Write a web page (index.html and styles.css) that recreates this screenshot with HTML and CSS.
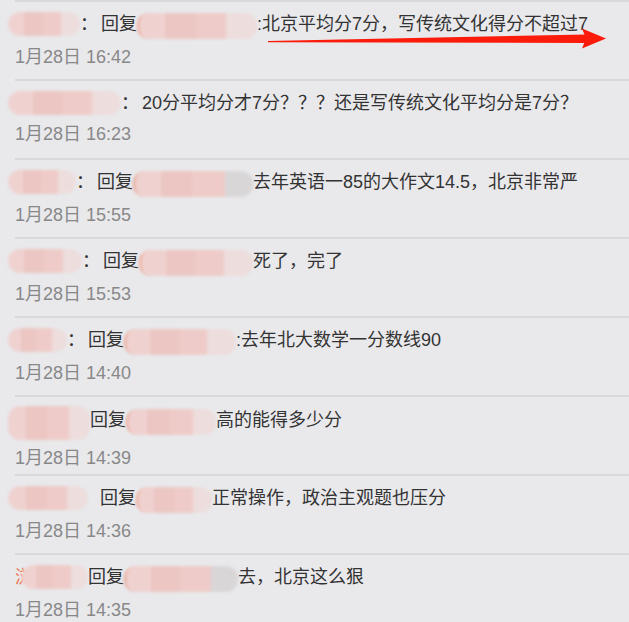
FILE: index.html
```html
<!DOCTYPE html>
<html lang="zh-CN">
<head>
    <meta charset="UTF-8">
    <meta name="viewport" content="width=device-width, initial-scale=1.0">
    <title>评论</title>
    <link rel="stylesheet" href="styles.css">
</head>
<body>
    <ul class="comments">
        <li class="item">
            <p class="text"><span class="blur name" style="width:72px"></span><span class="colon">：</span>回复<span class="blur at" style="width:118px"></span>:北京平均分7分，写传统文化得分不超过7</p>
            <p class="time">1月28日 16:42</p>
        </li>
        <li class="item">
            <p class="text"><span class="blur name" style="width:113px"></span><span class="colon">：</span>20分平均分才7分？？？还是写传统文化平均分是7分？</p>
            <p class="time">1月28日 16:23</p>
        </li>
        <li class="item">
            <p class="text"><span class="blur name" style="width:68px"></span><span class="colon">：</span>回复<span class="blur at gray-end" style="width:118px"></span>去年英语一85的大作文14.5，北京非常严</p>
            <p class="time">1月28日 15:55</p>
        </li>
        <li class="item">
            <p class="text"><span class="blur name" style="width:74px"></span><span class="colon">：</span>回复<span class="blur at" style="width:112px"></span>死了，完了</p>
            <p class="time">1月28日 15:53</p>
        </li>
        <li class="item">
            <p class="text"><span class="blur name" style="width:59px"></span><span class="colon">：</span>回复<span class="blur at" style="width:110px"></span>:去年北大数学一分数线90</p>
            <p class="time">1月28日 14:40</p>
        </li>
        <li class="item">
            <p class="text"><span class="blur name tall" style="width:82px"></span>回复<span class="blur at" style="width:88px"></span>高的能得多少分</p>
            <p class="time">1月28日 14:39</p>
        </li>
        <li class="item">
            <p class="text"><span class="blur name" style="width:80px"></span><span class="gap"></span>回复<span class="blur at" style="width:74px"></span>正常操作，政治主观题也压分</p>
            <p class="time">1月28日 14:36</p>
        </li>
        <li class="item">
            <p class="text"><span class="lead">浏</span><span class="blur name" style="width:67px"></span>回复<span class="blur at gray-end" style="width:112px"></span>去，北京这么狠</p>
            <p class="time">1月28日 14:35</p>
        </li>
    </ul>

    <!-- red marker arrow drawn over the first comment -->
    <svg class="arrow" width="629" height="60" viewBox="0 0 629 60">
        <polygon points="268,41 586,34.5 586,43 268,42.2" fill="#fb1b0b"/>
        <polygon points="582,28.5 606,38.5 582,48.5 586,38.5" fill="#fb1b0b"/>
    </svg>
</body>
</html>
```

FILE: styles.css
```css
body {
    margin: 0;
    background-color: #e9e9ec;
    font-family: "Liberation Sans", "Noto Sans CJK SC", sans-serif;
    overflow: hidden;
}
.comments {
    list-style: none;
    margin: 0 0 0 15px;
    padding: 0;
}
.item {
    border-top: 2px solid #d9d9dc;
    padding-top: 9px;
    box-sizing: border-box;
    height: 79px;
}
.text {
    margin: 0;
    font-size: 18px;
    line-height: 26px;
    color: #333;
    white-space: nowrap;
}
.time {
    margin: 5px 0 0;
    font-size: 18px;
    line-height: 26px;
    color: #888;
}
.colon {
    margin-right: 3px;
}
.gap {
    display: inline-block;
    width: 12px;
}
.lead {
    color: #eb7350;
    margin-right: -12px;
}
.blur {
    display: inline-block;
    height: 24px;
    vertical-align: -6px;
    border-radius: 12px;
    background: linear-gradient(90deg, #efd2d0 0 22%, #ecc6c3 22% 48%, #eecbc8 48% 74%, #eddddc 74%);
    filter: blur(1.5px);
}
.name {
    margin-left: -7px;
}
.lead + .name {
    margin-left: 0;
}
.at {
    height: 26px;
    vertical-align: -9px;
    border-left: 2px solid rgba(235, 115, 80, 0.5);
}
.gray-end {
    background: linear-gradient(90deg, #efd2d0 0 22%, #ecc6c3 22% 48%, #eecbc8 48% 76%, #d9d6d8 76%);
}
.tall {
    height: 34px;
    vertical-align: -14px;
}
.arrow {
    position: absolute;
    left: 0;
    top: 0;
    pointer-events: none;
}
```
